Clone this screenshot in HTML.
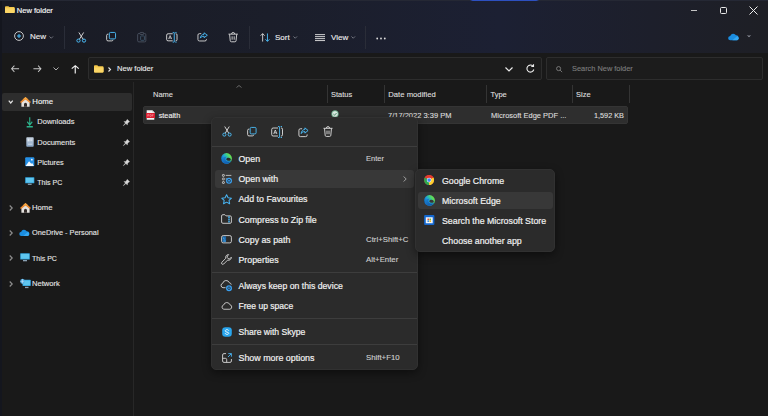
<!DOCTYPE html>
<html><head><meta charset="utf-8"><title>New folder</title>
<style>
*{box-sizing:border-box;margin:0;padding:0}
html,body{width:768px;height:416px;overflow:hidden;background:#191919}
body{font-family:"Liberation Sans",sans-serif;font-size:7.5px;color:#e4e4e4;position:relative}
.abs{position:absolute}
.t{position:absolute;white-space:nowrap;line-height:10px;height:10px;-webkit-text-stroke:.12px currentColor}
#top{left:0;top:0;width:768px;height:53px;background:linear-gradient(90deg,#191b24 0%,#1b1e2a 35%,#1c2033 65%,#1d1f2b 85%,#1e1f25 100%)}
#edge{left:0;top:0;width:1.5px;height:416px;background:#14161e}
#addr{left:0;top:53px;width:768px;height:32px;background:#191919}
.box{position:absolute;border:1px solid #2d2d2d;border-radius:2px;background:#1c1c1c}
#side{left:2px;top:85px;width:131px;height:331px;background:#191919}
.vline{position:absolute;width:1px;background:#343434}
.sel{position:absolute;background:#2d2d2d;border-radius:2px}
.menu{position:absolute;background:#2b2b2b;border:1px solid #313131;border-radius:5px;box-shadow:0 3px 8px rgba(0,0,0,.45)}
.mi{font-size:8.8px;color:#f0f0f0;-webkit-text-stroke:.2px currentColor}
.sc{font-size:7.8px;color:#cfcfcf}
.hl{position:absolute;background:#383838;border-radius:3px}
.sep{position:absolute;height:1px;background:#3d3d3d}
svg{position:absolute;overflow:visible}
</style></head><body>
<div class="abs" id="top"></div>
<div class="abs" id="addr"></div>
<div class="abs" id="side"></div>
<div class="abs" id="edge"></div>

<!-- title bar -->
<svg style="left:5.300px;top:6px" width="9.700" height="7" viewBox="0 0 11 9" preserveAspectRatio="none"><path d="M0 1.2C0 .6.4.2 1 .2h2.8l1.2 1.2H10c.6 0 1 .4 1 1V8c0 .6-.4 1-1 1H1c-.6 0-1-.4-1-1z" fill="#f5c84a"/><path d="M0 3h11v5c0 .6-.4 1-1 1H1c-.6 0-1-.4-1-1z" fill="#fbd666"/></svg>
<div class="t" style="left:16.800px;top:5.600px;font-size:7.55px;color:#f0f0f0;-webkit-text-stroke:.2px #f0f0f0">New folder</div>
<svg style="left:691px;top:9.500px" width="6" height="1" viewBox="0 0 6 1"><rect width="6" height="1" fill="#c4c4c4"/></svg>
<svg style="left:720px;top:6.500px" width="7" height="7" viewBox="0 0 7 7" fill="none" stroke="#e8e8e8" stroke-width="1"><rect x=".5" y=".5" width="6" height="6" rx="1"/></svg>
<svg style="left:749px;top:5.500px" width="9" height="9" viewBox="0 0 9 9" fill="none" stroke="#ececec" stroke-width="1"><path d="M.500 .5l8 8M8.500 .5l-8 8"/></svg>
<div class="abs" style="left:0;top:0;width:768px;height:1px;background:#252834"></div>
<div class="abs" style="left:470px;top:0;width:69px;height:1.300px;background:linear-gradient(90deg,rgba(45,80,192,0),#2d50c0 4%,#2d50c0 96%,rgba(45,80,192,0))"></div>

<!-- toolbar -->
<div class="abs" style="left:0;top:1.5px;width:768px;height:0">
<svg style="left:13.900px;top:29.800px" width="10" height="10" viewBox="0 0 10 10" fill="none" stroke="#d8d8d8" stroke-width=".9"><circle cx="5" cy="5" r="4.400"/><path d="M5 3v4M3 5h4" stroke="#4cc2ff" stroke-width="1"/></svg>
<div class="t" style="left:30px;top:30.500px;font-size:8px;color:#ededed">New</div>
<svg style="left:48.500px;top:34.300px" width="4.500" height="2.700" viewBox="0 0 5 3" fill="none" stroke="#858892" stroke-width=".9"><path d="M.500 .5l2 2 2-2"/></svg>
<div class="vline" style="left:64px;top:24.500px;height:23px;background:#2a2d38"></div>
<!-- cut -->
<svg style="left:75.500px;top:30px" width="10.500" height="11" viewBox="0 0 11 12" preserveAspectRatio="none" fill="none" stroke-width="1"><path d="M3 .5l4.500 7.500M8 .5L3.500 8" stroke="#dcdcdc"/><circle cx="2.600" cy="9.400" r="1.700" stroke="#4cc2ff"/><circle cx="8.400" cy="9.400" r="1.700" stroke="#4cc2ff"/></svg>
<!-- copy -->
<svg style="left:105.500px;top:30.700px" width="10.500" height="9.500" viewBox="0 0 11 11" preserveAspectRatio="none" fill="none" stroke-width="1"><rect x="3.500" y=".5" width="6.500" height="7.500" rx="1.300" stroke="#4cc2ff"/><path d="M2.500 2.500H2A1.300 1.300 0 0 0 .7 3.800v5A1.500 1.500 0 0 0 2.200 10.300H6A1.300 1.300 0 0 0 7.300 9" stroke="#dcdcdc"/></svg>
<!-- paste (disabled) -->
<svg style="left:136.500px;top:30.500px" width="9.500" height="10.500" viewBox="0 0 10 12" preserveAspectRatio="none" fill="none" stroke="#4a5160" stroke-width="1"><rect x=".7" y="1.700" width="8.600" height="9.600" rx="1.300"/><rect x="3" y=".5" width="4" height="2.400" rx=".8" fill="#1c1f2b"/><rect x="3.800" y="4.500" width="4" height="5" rx=".6" stroke="#3d5468"/></svg>
<!-- rename -->
<svg style="left:166.300px;top:30.200px" width="11.500" height="10.600" viewBox="0 0 12 12" preserveAspectRatio="none" fill="none" stroke-width="1"><path d="M7 2H2.200A1.500 1.500 0 0 0 .7 3.500v5A1.500 1.500 0 0 0 2.200 10H7M10 2h.3a1.200 1.200 0 0 1 1.200 1.200v5.600A1.200 1.200 0 0 1 10.300 10H10" stroke="#dcdcdc"/><path d="M7 .5h1.200M9.700 .5H11M8.600 .5v11M7 11.500h1.200M9.700 11.500H11" stroke="#4cc2ff"/><path d="M2.700 8l1.600-4 1.600 4M3.200 6.800h2.200" stroke="#dcdcdc" stroke-width=".8"/></svg>
<!-- share -->
<svg style="left:196.500px;top:30.500px" width="11.300" height="9.800" viewBox="0 0 12 12" preserveAspectRatio="none" fill="none" stroke-width="1"><path d="M4.500 2H2.700A1.700 1.700 0 0 0 1 3.700v5.600A1.700 1.700 0 0 0 2.700 11h5.600A1.700 1.700 0 0 0 10 9.300V8.500" stroke="#dcdcdc"/><path d="M7.500 1l3.500 3-3.500 3V5.200C5.500 5.200 4.300 6 3.500 7.500 3.700 5 5 3 7.500 2.800z" stroke="#4cc2ff" stroke-linejoin="round"/></svg>
<!-- delete -->
<svg style="left:227.500px;top:30.500px" width="10.300" height="10.300" viewBox="0 0 11 12" preserveAspectRatio="none" fill="none" stroke="#dcdcdc" stroke-width="1"><path d="M.500 2.500h10M3.800 2.300a1.700 1.700 0 0 1 3.400 0M1.700 2.700l.7 7.500a1.300 1.300 0 0 0 1.300 1.200h3.600a1.300 1.300 0 0 0 1.300-1.200l.7-7.500M4.400 5v4M6.600 5v4"/></svg>
<div class="vline" style="left:249px;top:24.500px;height:23px;background:#2a2d38"></div>
<div class="vline" style="left:365px;top:24.500px;height:23px;background:#2a2d38"></div>
<!-- sort -->
<svg style="left:260px;top:31px" width="10.500" height="9" viewBox="0 0 12 10" preserveAspectRatio="none" fill="none" stroke-width="1"><path d="M3 9.500V.8M.700 3L3 .7 5.300 3" stroke="#dcdcdc"/><path d="M8.500 .5v8.700M6.200 7l2.300 2.300L10.800 7" stroke="#4cc2ff"/></svg>
<div class="t" style="left:275px;top:31px;font-size:8px;color:#ededed">Sort</div>
<svg style="left:293px;top:34.300px" width="4.500" height="2.700" viewBox="0 0 5 3" fill="none" stroke="#858892" stroke-width=".9"><path d="M.500 .5l2 2 2-2"/></svg>
<!-- view -->
<svg style="left:315px;top:32px" width="10" height="7" viewBox="0 0 10 8" preserveAspectRatio="none" fill="none" stroke="#dcdcdc" stroke-width="1"><path d="M0 .7h10M0 3h10M0 5.300h10M0 7.500h10"/></svg>
<div class="t" style="left:331px;top:31px;font-size:8px;color:#ededed">View</div>
<svg style="left:351px;top:34.300px" width="4.500" height="2.700" viewBox="0 0 5 3" fill="none" stroke="#858892" stroke-width=".9"><path d="M.500 .5l2 2 2-2"/></svg>
<svg style="left:376px;top:35px" width="10" height="3" viewBox="0 0 10 3" fill="#e0e0e0"><circle cx="1.200" cy="1.500" r=".9"/><circle cx="5" cy="1.500" r=".9"/><circle cx="8.800" cy="1.500" r=".9"/></svg>
<!-- onedrive -->
<svg style="left:727.500px;top:31px" width="11.500" height="7.700" viewBox="0 0 12 8"><path d="M2.600 7.600A2.300 2.300 0 0 1 2.300 3 3.300 3.300 0 0 1 8.300 2.400 2.700 2.700 0 0 1 9.500 7.600z" fill="#1b8de0"/><path d="M4.500 7.600l5-4.300A2.300 2.300 0 0 1 9.700 7.600z" fill="#35a8f2"/></svg>
<svg style="left:747px;top:33.500px" width="4" height="2.500" viewBox="0 0 5 3" fill="#858892" stroke="#858892" stroke-width=".9"><path d="M.500 .5l2 2 2-2"/></svg>

</div>
<!-- address row -->
<svg style="left:10.500px;top:65px" width="8.500" height="7.500" viewBox="0 0 10 8" preserveAspectRatio="none" fill="none" stroke="#c8c8c8" stroke-width="1.1"><path d="M9.500 4H.8M4 .7L.7 4 4 7.300"/></svg>
<svg style="left:32.500px;top:65px" width="8.500" height="7.500" viewBox="0 0 10 8" preserveAspectRatio="none" fill="none" stroke="#c8c8c8" stroke-width="1.1"><path d="M.500 4h8.700M6 .7L9.300 4 6 7.300"/></svg>
<svg style="left:53px;top:67px" width="6" height="4" viewBox="0 0 6 4" fill="none" stroke="#c0c0c0" stroke-width=".9"><path d="M.500 .5L3 3 5.500 .5"/></svg>
<svg style="left:71px;top:65px" width="8.500" height="9" viewBox="0 0 8 10" preserveAspectRatio="none" fill="none" stroke="#f0f0f0" stroke-width="1.1"><path d="M4 9.500V.8M.700 4L4 .7 7.300 4"/></svg>
<div class="box" style="left:88px;top:56.500px;width:453.500px;height:23.500px"></div>
<svg style="left:93.500px;top:64.500px" width="9.500" height="7.500" viewBox="0 0 11 9" preserveAspectRatio="none"><path d="M0 1.200C0 .6.4.2 1 .2h2.800l1.200 1.200H10c.6 0 1 .4 1 1V8c0 .6-.4 1-1 1H1c-.6 0-1-.4-1-1z" fill="#f5c84a"/><path d="M0 3h11v5c0 .6-.4 1-1 1H1c-.6 0-1-.4-1-1z" fill="#fbd666"/></svg>
<svg style="left:108px;top:66.500px" width="3" height="5" viewBox="0 0 3 5" fill="none" stroke="#e8e8e8" stroke-width="1.1"><path d="M.500 .5l2 2-2 2"/></svg>
<div class="t" style="left:117px;top:64px;font-size:7.6px;color:#e8e8e8">New folder</div>
<svg style="left:504.500px;top:66.800px" width="8" height="5" viewBox="0 0 8 5" fill="none" stroke="#ececec" stroke-width="1.150"><path d="M.500 .5L4 4 7.500 .5"/></svg>
<svg style="left:525.500px;top:64px" width="9" height="9" viewBox="0 0 9 9" fill="none" stroke="#ececec" stroke-width="1.100"><path d="M7.800 5.500A3.500 3.500 0 1 1 7 2.200M7.500 .3v2.200H5.300"/></svg>
<div class="box" style="left:546px;top:56.500px;width:217px;height:23.500px"></div>
<svg style="left:555.500px;top:65.500px" width="6.500" height="6.500" viewBox="0 0 7 7" fill="none" stroke="#858585" stroke-width=".9"><circle cx="2.800" cy="2.800" r="2.200"/><path d="M4.400 4.400L6.600 6.600"/></svg>
<div class="t" style="left:572px;top:64px;font-size:7.4px;color:#7c7c7c">Search New folder</div>

<!-- column headers -->
<svg style="left:235.500px;top:84.500px" width="6" height="3" viewBox="0 0 6 3" fill="none" stroke="#8a8a8a" stroke-width=".7"><path d="M.500 2.500L3 .5 5.500 2.500"/></svg>
<div class="t" style="left:153px;top:89.500px;color:#dedede">Name</div>
<div class="t" style="left:331px;top:89.500px;color:#dedede">Status</div>
<div class="t" style="left:388.300px;top:89.500px;font-size:7.7px;color:#dedede">Date modified</div>
<div class="t" style="left:490.500px;top:89.500px;color:#dedede">Type</div>
<div class="t" style="left:576px;top:89.500px;color:#dedede">Size</div>
<div class="vline" style="left:327px;top:85px;height:18px"></div>
<div class="vline" style="left:384px;top:85px;height:18px"></div>
<div class="vline" style="left:486px;top:85px;height:18px"></div>
<div class="vline" style="left:572px;top:85px;height:18px"></div>
<div class="vline" style="left:629px;top:85px;height:18px"></div>

<!-- sidebar -->
<div class="vline" style="left:133px;top:82px;height:334px;background:#272727"></div>
<div class="sel" style="left:2px;top:92.500px;width:129.500px;height:18px"></div>
<svg style="left:7.500px;top:99.500px" width="5.500" height="4" viewBox="0 0 5 4" fill="none" stroke="#e4e4e4" stroke-width="1.200"><path d="M.500 .7l2 2.300 2-2.300"/></svg>
<svg style="left:19.500px;top:96.500px" width="11" height="10" viewBox="0 0 11 10"><path d="M1.400 4.600L5.500 1.200l4.100 3.400v5.100H1.400z" fill="#e4e1dd"/><path d="M5.500 0L0 4.900l1.100 1.200L5.500 2.500l4.400 3.600L11 4.900z" fill="#ee8a30"/><path d="M5.500 0L2.700 2.500h5.600z" fill="#f6a740"/><path d="M4 9.700V7.300a1.500 1.500 0 0 1 3 0v2.400z" fill="#332c2a"/></svg>
<div class="t" style="left:32.300px;top:96.800px;font-size:7.8px;color:#f4f4f4">Home</div>

<svg style="left:26px;top:116.500px" width="7.500" height="10.500" viewBox="0 0 9 10" preserveAspectRatio="none" fill="none" stroke="#2db38c" stroke-width="1.300"><path d="M4.500 .3v6.800M1.500 4.600l3 3 3-3M.8 9.300h7.400"/></svg>
<div class="t" style="left:37.300px;top:117px">Downloads</div>
<svg style="left:26px;top:136.500px" width="8" height="10" viewBox="0 0 8 10"><defs><linearGradient id="dg" x1="0" y1="0" x2="0" y2="1"><stop offset="0" stop-color="#c3d0de"/><stop offset="1" stop-color="#8aa6c5"/></linearGradient></defs><rect x=".3" y=".3" width="7.400" height="9.400" rx=".8" fill="url(#dg)"/><path d="M4.300 2.200h2M4.300 3.600h2M2 7.200h4.300" stroke="#e6eef6" stroke-width=".7"/><rect x="1.700" y="1.700" width="1.800" height="2.600" fill="#dfe8f1"/></svg>
<div class="t" style="left:37.300px;top:137.500px">Documents</div>
<svg style="left:25px;top:157px" width="9.500" height="9.500" viewBox="0 0 10 9" preserveAspectRatio="none"><rect x=".2" y=".2" width="9.600" height="8.600" rx="1" fill="#2590e6"/><path d="M.6 8.500L4.300 4l2.300 2.500 1-.9 1.800 2.900z" fill="#f2f8fd"/><circle cx="7.200" cy="2.500" r=".9" fill="#f2f8fd"/></svg>
<div class="t" style="left:37.300px;top:157.500px;font-size:7.3px">Pictures</div>
<svg style="left:25px;top:177.200px" width="9.500" height="8.600" viewBox="0 0 10 9"><rect x=".2" y=".2" width="9.600" height="6.300" rx=".6" fill="#36a7e0"/><rect x="1" y="1" width="8" height="4.700" fill="#5fc6ef"/><rect x="3" y="7" width="4" height="1.300" fill="#8aa0b2"/></svg>
<div class="t" style="left:37.300px;top:177.800px;font-size:7px">This PC</div>
<svg class="pin" style="left:123px;top:118.5px" width="7" height="7" viewBox="0 0 7 7"><path d="M4.200 .3l2.500 2.500-.8.300-1.300 1.300-.2 1.700L2.900 4.600.4 6.700.3 6.600 2.400 4.100.9 2.600l1.700-.2L3.900 1.100z" fill="#d6d6d6" stroke="#d6d6d6" stroke-width=".3"/></svg>
<svg class="pin" style="left:123px;top:138.5px" width="7" height="7" viewBox="0 0 7 7"><path d="M4.200 .3l2.500 2.500-.8.300-1.300 1.300-.2 1.700L2.900 4.600.4 6.700.3 6.600 2.400 4.100.9 2.600l1.700-.2L3.900 1.100z" fill="#d6d6d6" stroke="#d6d6d6" stroke-width=".3"/></svg>
<svg class="pin" style="left:123px;top:158.5px" width="7" height="7" viewBox="0 0 7 7"><path d="M4.200 .3l2.500 2.500-.8.300-1.300 1.300-.2 1.700L2.900 4.600.4 6.700.3 6.600 2.400 4.100.9 2.600l1.700-.2L3.900 1.100z" fill="#d6d6d6" stroke="#d6d6d6" stroke-width=".3"/></svg>
<svg class="pin" style="left:123px;top:179px" width="7" height="7" viewBox="0 0 7 7"><path d="M4.200 .3l2.500 2.500-.8.300-1.300 1.300-.2 1.700L2.900 4.600.4 6.700.3 6.600 2.400 4.100.9 2.600l1.700-.2L3.900 1.100z" fill="#d6d6d6" stroke="#d6d6d6" stroke-width=".3"/></svg>

<svg style="left:8.700px;top:204.8px" width="4" height="6" viewBox="0 0 4 6" fill="none" stroke="#8e8e8e" stroke-width="1.150"><path d="M.700 .5L3.200 3 .7 5.500"/></svg>
<svg style="left:19.700px;top:202.700px" width="11" height="10" viewBox="0 0 11 10"><path d="M1.400 4.600L5.500 1.200l4.100 3.400v5.100H1.400z" fill="#e4e1dd"/><path d="M5.500 0L0 4.900l1.100 1.200L5.500 2.500l4.400 3.600L11 4.900z" fill="#ee8a30"/><path d="M5.500 0L2.700 2.500h5.600z" fill="#f6a740"/><path d="M4 9.700V7.300a1.500 1.500 0 0 1 3 0v2.400z" fill="#332c2a"/></svg>
<div class="t" style="left:32px;top:203px;font-size:7.7px">Home</div>
<svg style="left:8.700px;top:229.8px" width="4" height="6" viewBox="0 0 4 6" fill="none" stroke="#8e8e8e" stroke-width="1.150"><path d="M.700 .5L3.200 3 .7 5.500"/></svg>
<svg style="left:19.300px;top:229px" width="11.200" height="7.300" viewBox="0 0 12 8"><path d="M2.600 7.600A2.300 2.300 0 0 1 2.300 3 3.300 3.300 0 0 1 8.300 2.400 2.700 2.700 0 0 1 9.500 7.600z" fill="#1b8de0"/><path d="M4.500 7.600l5-4.300A2.300 2.300 0 0 1 9.700 7.600z" fill="#35a8f2"/></svg>
<div class="t" style="left:32px;top:228px;font-size:7.35px">OneDrive - Personal</div>
<svg style="left:8.700px;top:255px" width="4" height="6" viewBox="0 0 4 6" fill="none" stroke="#8e8e8e" stroke-width="1.150"><path d="M.700 .5L3.200 3 .7 5.500"/></svg>
<svg style="left:20.300px;top:253.300px" width="10" height="9" viewBox="0 0 10 9"><rect x=".2" y=".2" width="9.600" height="6.300" rx=".6" fill="#36a7e0"/><rect x="1" y="1" width="8" height="4.700" fill="#5fc6ef"/><rect x="3" y="7" width="4" height="1.300" fill="#8aa0b2"/></svg>
<div class="t" style="left:32px;top:253.500px;font-size:7px">This PC</div>
<svg style="left:8.700px;top:280.5px" width="4" height="6" viewBox="0 0 4 6" fill="none" stroke="#8e8e8e" stroke-width="1.150"><path d="M.700 .5L3.200 3 .7 5.500"/></svg>
<svg style="left:19.500px;top:277.600px" width="11" height="11" viewBox="0 0 11 10" preserveAspectRatio="none"><rect x="2.500" y="1.500" width="8.300" height="5.800" rx=".6" fill="#36a7e0"/><rect x="3.300" y="2.300" width="6.700" height="4.200" fill="#5fc6ef"/><rect x="5" y="8" width="3.500" height="1.200" fill="#8aa0b2"/><circle cx="2.500" cy="3" r="2.300" fill="#58b0e8"/><path d="M.8 3h3.400M2.500 1v4" stroke="#d6ecfa" stroke-width=".5"/></svg>
<div class="t" style="left:32px;top:278.800px;font-size:7.6px">Network</div>

<!-- file row -->
<div class="sel" style="left:143px;top:106px;width:485px;height:18px;background:#2e2e2e;border:1px solid #343434;border-radius:2px"></div>
<svg style="left:146px;top:109.500px" width="9" height="10" viewBox="0 0 9 10"><path d="M.7 .2h5.600L8.300 2.200v7.600H.7z" fill="#f4f4f4"/><path d="M6.300 .2v2h2z" fill="#c4c4c4"/><rect x="0" y="2.900" width="9" height="5.200" rx=".5" fill="#dc1f31"/><path d="M1.700 6.500V4.500h.8a.6.600 0 0 1 0 1.200h-.8M4 4.500v2h.5a1 1 0 0 0 0-2zM6.400 6.500V4.500h1.100M6.400 5.500h.9" stroke="#f7c6ca" stroke-width=".4" fill="none"/></svg>
<div class="t" style="left:158.700px;top:110.800px;font-size:7.3px;color:#f0f0f0">stealth</div>
<svg style="left:330.700px;top:110px" width="8" height="8" viewBox="0 0 8 8"><circle cx="4" cy="4" r="3.400" fill="#dfeee6" stroke="#3a8f63" stroke-width=".7"/><path d="M2.400 4.100l1.100 1.100 2.100-2.200" stroke="#2d7d53" stroke-width=".8" fill="none"/></svg>
<div class="t" style="left:388px;top:110.800px;color:#dcdcdc">7/17/2022 3:39 PM</div>
<div class="t" style="left:491px;top:110.800px;color:#dcdcdc">Microsoft Edge PDF ...</div>
<div class="t" style="left:572px;width:52px;text-align:right;top:110.800px;font-size:7.3px;color:#dcdcdc">1,592 KB</div>

<!-- MENU -->
<div class="menu" id="menu" style="left:211px;top:117px;width:207px;height:252.500px"></div>

<!-- menu top icons -->
<svg style="left:221.500px;top:126px" width="10" height="11" viewBox="0 0 11 12" fill="none" stroke-width="1"><path d="M3 .5l4.500 7.500M8 .5L3.500 8" stroke="#e0e0e0"/><circle cx="2.600" cy="9.400" r="1.700" stroke="#4cc2ff"/><circle cx="8.400" cy="9.400" r="1.700" stroke="#4cc2ff"/></svg>
<svg style="left:247px;top:127px" width="10" height="9.500" viewBox="0 0 11 11" preserveAspectRatio="none" fill="none" stroke-width="1"><rect x="3.500" y=".5" width="6.500" height="7.500" rx="1.300" stroke="#4cc2ff"/><path d="M2.500 2.500H2A1.300 1.300 0 0 0 .7 3.800v5A1.500 1.500 0 0 0 2.200 10.300H6A1.300 1.300 0 0 0 7.300 9" stroke="#e0e0e0"/></svg>
<svg style="left:271px;top:126px" width="12" height="12" viewBox="0 0 12 12" fill="none" stroke-width=".9"><path d="M7 2H2.200A1.500 1.500 0 0 0 .7 3.500v5A1.500 1.500 0 0 0 2.200 10H7M10 2h.3a1.200 1.200 0 0 1 1.200 1.200v5.600A1.200 1.200 0 0 1 10.300 10H10" stroke="#e0e0e0"/><path d="M7 .5h1.200M9.700 .5H11M8.600 .5v11M7 11.500h1.200M9.700 11.500H11" stroke="#4cc2ff"/><path d="M2.700 8l1.600-4 1.600 4M3.200 6.800h2.200" stroke="#e0e0e0" stroke-width=".8"/></svg>
<svg style="left:297.500px;top:126.500px" width="11" height="10.500" viewBox="0 0 12 12" preserveAspectRatio="none" fill="none" stroke-width="1"><path d="M4.500 2H2.700A1.700 1.700 0 0 0 1 3.700v5.600A1.700 1.700 0 0 0 2.700 11h5.600A1.700 1.700 0 0 0 10 9.300V8.500" stroke="#e0e0e0"/><path d="M7.500 1l3.500 3-3.500 3V5.200C5.500 5.200 4.300 6 3.500 7.500 3.700 5 5 3 7.500 2.800z" stroke="#4cc2ff" stroke-linejoin="round"/></svg>
<svg style="left:322.500px;top:126.300px" width="10" height="11" viewBox="0 0 11 12" fill="none" stroke="#e0e0e0" stroke-width="1"><path d="M.500 2.500h10M3.800 2.300a1.700 1.700 0 0 1 3.400 0M1.700 2.700l.7 7.500a1.300 1.300 0 0 0 1.300 1.200h3.600a1.300 1.300 0 0 0 1.300-1.200l.7-7.500M4.400 5v4M6.600 5v4"/></svg>
<div class="sep" style="left:212px;top:145.500px;width:205px"></div>

<!-- Open -->
<svg style="left:221px;top:153.300px" width="11" height="11" viewBox="0 0 11 11"><defs><linearGradient id="eg1" x1="0" y1=".8" x2="1" y2=".1"><stop offset="0" stop-color="#0b55a0"/><stop offset=".38" stop-color="#1c9be0"/><stop offset=".6" stop-color="#35c79a"/><stop offset=".8" stop-color="#62de55"/></linearGradient><linearGradient id="eg2" x1="0" y1="0" x2="1" y2="1"><stop offset="0" stop-color="#1b86d8"/><stop offset="1" stop-color="#0f4f9e"/></linearGradient></defs><circle cx="5.500" cy="5.500" r="5.400" fill="url(#eg1)"/><path d="M1.100 8.600C2.400 10.600 5 11.300 7.500 10.300c1.300-.6 2.300-1.500 2.800-2.600C8.500 9 5.600 9 4.600 7 3.900 5.500 4.700 4.200 5.900 3.800 3.500 3.300 1.500 4.700 1 6.500c-.1.700-.1 1.400.1 2.100z" fill="url(#eg2)"/><path d="M5.300 6.300c0-1 1-1.700 2.200-1.600 1.300.1 2.400.9 2.300 2-.1.700-.8 1.100-1.700 1.100-1.500.1-2.800-.5-2.800-1.500z" fill="#2b2b2b"/></svg>
<div class="t mi" style="left:238.500px;top:153.500px">Open</div>
<div class="t sc" style="left:366px;top:154px;font-size:7.5px">Enter</div>

<!-- Open with -->
<div class="hl" style="left:215px;top:169.500px;width:199px;height:18px"></div>
<svg style="left:221.800px;top:173.800px" width="10.300" height="10.300" viewBox="0 0 11 11" fill="none" stroke="#d6d6d6" stroke-width=".85"><rect x=".5" y=".5" width="2" height="2" rx=".5"/><rect x=".5" y="4.300" width="2" height="2" rx=".5"/><rect x=".5" y="8.100" width="2" height="2" rx=".5"/><path d="M4 1.500h6M4 5.300h1.300"/><circle cx="7.500" cy="7.300" r="3.200" fill="#3aa0f0" stroke="none"/><circle cx="7.500" cy="7.300" r="1.500" fill="none" stroke="#23303c" stroke-width=".9"/></svg>
<div class="t mi" style="left:238.500px;top:174px">Open with</div>
<svg style="left:403px;top:176px" width="4" height="6" viewBox="0 0 4 6" fill="none" stroke="#bdbdbd" stroke-width=".8"><path d="M.700 .5L3.200 3 .7 5.500"/></svg>

<!-- Add to Favourites -->
<svg style="left:221px;top:193.600px" width="11.200" height="10.800" viewBox="0 0 11 11" preserveAspectRatio="none" fill="none" stroke="#49b6f5" stroke-width="1" stroke-linejoin="round"><path d="M5.500 .8l1.500 3 3.300.5-2.400 2.300.6 3.300-3-1.600-3 1.600.6-3.300L.7 4.300 4 3.800z"/></svg>
<div class="t mi" style="left:238.500px;top:194px">Add to Favourites</div>

<!-- Compress -->
<svg style="left:221px;top:214px" width="11" height="10" viewBox="0 0 11 10" fill="none" stroke-width=".9"><path d="M.6 2A1.300 1.300 0 0 1 1.900 .7h2l1.200 1.200h4A1.300 1.300 0 0 1 10.400 3.200V8A1.300 1.300 0 0 1 9.100 9.300H1.900A1.300 1.300 0 0 1 .6 8z" stroke="#d6d6d6"/><path d="M8 2.300v6.600" stroke="#49b6f5" stroke-width="1.500" stroke-dasharray="1.600 .5"/></svg>
<div class="t mi" style="left:238.500px;top:214.500px">Compress to Zip file</div>

<!-- Copy as path -->
<svg style="left:221px;top:235px" width="11" height="9" viewBox="0 0 11 9" fill="none" stroke-width=".9"><rect x="1.300" y="1.300" width="3.800" height="5.900" rx=".8" fill="#1a68ad" stroke="none"/><rect x=".6" y=".6" width="9.800" height="7.300" rx="1.600" stroke="#d6d6d6"/><path d="M2.300 2.500l1 2M2.300 6h2.500" stroke="#6cc6f8" stroke-width=".7"/></svg>
<div class="t mi" style="left:238.500px;top:234.500px">Copy as path</div>
<div class="t sc" style="left:366px;top:234.500px">Ctrl+Shift+C</div>

<!-- Properties -->
<svg style="left:221px;top:254px" width="11" height="11" viewBox="0 0 11 11" fill="none" stroke="#d6d6d6" stroke-width=".9" stroke-linejoin="round"><path d="M7.700 .6a2.800 2.800 0 0 0-2.900 3.700L.9 8.200a1.200 1.200 0 0 0 1.800 1.800l3.900-3.900A2.800 2.800 0 0 0 10.300 3.200L8.500 5 7 4.600 6.100 3.400l.4-1.500z"/></svg>
<div class="t mi" style="left:238.500px;top:254.500px">Properties</div>
<div class="t sc" style="left:366px;top:254.500px">Alt+Enter</div>
<div class="sep" style="left:212px;top:272px;width:205px"></div>

<!-- Always keep -->
<svg style="left:220px;top:280px" width="13" height="12" viewBox="0 0 13 12" fill="none" stroke-width=".9"><path d="M5.500 7.700H3A2.300 2.300 0 0 1 2.800 3.200 3.400 3.400 0 0 1 9.300 2.700 2.600 2.600 0 0 1 11.300 4.600" stroke="#d6d6d6"/><circle cx="9" cy="8.200" r="3" fill="#3aa0f0"/><circle cx="9" cy="8.200" r="1.300" stroke="#1e2a35" stroke-width=".8"/></svg>
<div class="t mi" style="left:238.500px;top:280.700px;font-size:8.7px">Always keep on this device</div>

<!-- Free up space -->
<svg style="left:220.500px;top:301.500px" width="11.500" height="8" viewBox="0 0 12 8" fill="none" stroke="#d6d6d6" stroke-width=".9"><path d="M3 7.400A2.300 2.300 0 0 1 2.800 2.900 3.400 3.400 0 0 1 9.300 2.700 2.400 2.400 0 0 1 9.300 7.400z"/></svg>
<div class="t mi" style="left:238.500px;top:300.600px;font-size:8.55px">Free up space</div>
<div class="sep" style="left:212px;top:318px;width:205px"></div>

<!-- Skype -->
<svg style="left:222px;top:327px" width="10" height="10" viewBox="0 0 10 10"><rect x=".2" y=".2" width="9.600" height="9.600" rx="3.200" fill="#29a6ee"/><path d="M6.600 3.400C6.200 2.800 5.600 2.600 5 2.600c-.9 0-1.700.5-1.700 1.300 0 1.700 3.400.8 3.400 2.300 0 .8-.8 1.200-1.700 1.200-.8 0-1.500-.3-1.800-1" stroke="#fff" stroke-width=".9" fill="none" stroke-linecap="round"/></svg>
<div class="t mi" style="left:238.500px;top:327px;font-size:8.6px">Share with Skype</div>
<div class="sep" style="left:212px;top:343.800px;width:205px"></div>

<!-- Show more -->
<svg style="left:222px;top:353px" width="10" height="10" viewBox="0 0 10 10" fill="none" stroke-width=".9"><path d="M4 .6H2A1.400 1.400 0 0 0 .6 2v6A1.400 1.400 0 0 0 2 9.400h6A1.400 1.400 0 0 0 9.400 8V6" stroke="#d6d6d6"/><path d="M.6 5.300h2.700a1.400 1.400 0 0 1 1.400 1.400v2.700" stroke="#d6d6d6"/><path d="M6.300 .6h3.100v3.100M9.300 .7L6 4" stroke="#49b6f5"/></svg>
<div class="t mi" style="left:238.500px;top:353.200px;font-size:8.9px">Show more options</div>
<div class="t sc" style="left:366px;top:353px">Shift+F10</div>
<div class="menu" id="sub" style="left:415px;top:168.500px;width:140px;height:83.500px"></div>

<!-- submenu -->
<div class="hl" style="left:417.500px;top:191.500px;width:135px;height:17.500px"></div>
<svg style="left:424.300px;top:175.300px" width="10.200" height="10.200" viewBox="0 0 10 10"><circle cx="5" cy="5" r="4.900" fill="#e33b2e"/><path d="M5 5L.76 2.550A4.900 4.900 0 0 0 5 9.900z" fill="#2da94f"/><path d="M5 5v4.900A4.900 4.900 0 0 0 9.240 2.550z" fill="#fdd030"/><path d="M.76 2.550A4.900 4.900 0 0 1 9.240 2.550H5z" fill="#e33b2e"/><circle cx="5" cy="5" r="2.300" fill="#f4f4f4"/><circle cx="5" cy="5" r="1.800" fill="#4285f4"/></svg>
<div class="t mi" style="left:442px;top:176px">Google Chrome</div>
<svg style="left:424px;top:194.500px" width="11" height="11" viewBox="0 0 11 11"><circle cx="5.500" cy="5.500" r="5.400" fill="url(#eg1)"/><path d="M1.100 8.600C2.400 10.600 5 11.300 7.500 10.300c1.300-.6 2.300-1.500 2.800-2.600C8.500 9 5.600 9 4.600 7 3.900 5.500 4.700 4.200 5.900 3.800 3.500 3.300 1.500 4.700 1 6.500c-.1.700-.1 1.400.1 2.100z" fill="url(#eg2)"/><path d="M5.300 6.300c0-1 1-1.700 2.200-1.600 1.300.1 2.400.9 2.300 2-.1.700-.8 1.100-1.700 1.100-1.500.1-2.800-.5-2.800-1.500z" fill="#383838"/></svg>
<div class="t mi" style="left:442px;top:195.500px">Microsoft Edge</div>
<svg style="left:424.200px;top:214.800px" width="10.500" height="10.200" viewBox="0 0 10 10" preserveAspectRatio="none"><rect x=".1" y=".1" width="9.800" height="9.800" rx="1" fill="#1468cf"/><rect x="1.700" y="2.200" width="6.600" height="5.900" fill="#f0f4fa"/><rect x="3.300" y="3.500" width="1.500" height="1.500" fill="#e9503c"/><rect x="5.200" y="3.500" width="1.500" height="1.500" fill="#76b82a"/><rect x="3.300" y="5.300" width="1.500" height="1.500" fill="#2f8be0"/><rect x="5.200" y="5.300" width="1.500" height="1.500" fill="#f5b800"/></svg>
<div class="t mi" style="left:442px;top:215.500px">Search the Microsoft Store</div>
<div class="t mi" style="left:442px;top:235.500px">Choose another app</div>
</body></html>
